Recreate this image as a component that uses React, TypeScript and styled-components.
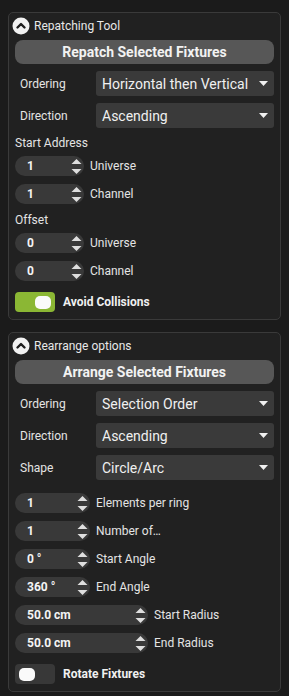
import React from 'react';
import styled, { createGlobalStyle } from 'styled-components';

const GlobalStyle = createGlobalStyle`
  html, body {
    margin: 0;
    padding: 0;
    background: #1b1b1b;
  }
  body {
    font-family: Roboto, "Liberation Sans", sans-serif;
    color: #e4e4e4;
  }
`;

const Page = styled.div`
  width: 289px;
  height: 696px;
  box-sizing: border-box;
  padding: 12px 8px 0 8px;
  display: flex;
  flex-direction: column;
  gap: 12px;
  background: #1b1b1b;
`;

const Panel = styled.section`
  display: flex;
  flex-direction: column;
  border: 1px solid #3a3a3a;
  border-radius: 5px;
  background: #212121;
  padding: 1px 0 7px;
`;

const Header = styled.div`
  height: 24px;
  display: flex;
  align-items: center;
  gap: 4px;
  padding: 0 3px;
  font-size: 12px;
  color: #e8e8e8;
`;

const Body = styled.div`
  display: flex;
  flex-direction: column;
  gap: 7px;
  padding: 0 6px;
  margin-top: 2px;
`;

const ActionButton = styled.button`
  height: 24px;
  border: none;
  border-radius: 8px;
  background: #575757;
  color: #f2f2f2;
  font-family: Roboto, "Liberation Sans", sans-serif;
  font-weight: 700;
  font-size: 14px;
  padding: 0;
`;

const FieldRow = styled.div`
  height: 25px;
  display: grid;
  grid-template-columns: 81px 1fr;
  align-items: center;
`;

const FieldLabel = styled.span`
  padding-left: 5px;
  font-size: 12px;
  color: #e4e4e4;
`;

const Select = styled.div`
  height: 25px;
  display: flex;
  align-items: center;
  justify-content: space-between;
  padding: 0 6px;
  border-radius: 3px;
  background: #3a3a3a;
  font-size: 14px;
  color: #f0f0f0;
`;

const SectionLabel = styled.div`
  height: 16px;
  line-height: 16px;
  font-size: 12px;
  margin-bottom: -2px;
  color: #e4e4e4;
`;

const SpinRow = styled.div<{ $mt?: number }>`
  height: 21px;
  display: flex;
  align-items: flex-start;
  gap: 6px;
  margin-top: ${p => p.$mt ?? 0}px;
`;

const SpinBox = styled.div<{ $w: number }>`
  width: ${p => p.$w}px;
  height: 20px;
  box-sizing: border-box;
  border-radius: 10px;
  background: #393939;
  display: flex;
  align-items: center;
  justify-content: space-between;
  padding: 0 2px 0 12px;
  font-size: 12px;
  font-weight: 700;
  color: #f4f4f4;
`;

const SpinLabel = styled.span`
  line-height: 20px;
  font-size: 12px;
  color: #e4e4e4;
`;

const ToggleRow = styled.div`
  height: 20px;
  display: flex;
  align-items: center;
  gap: 8px;
  margin-top: 3px;
  font-size: 12px;
  font-weight: 700;
  color: #f0f0f0;
`;

const Track = styled.div<{ $on: boolean }>`
  width: 40px;
  height: 20px;
  box-sizing: border-box;
  border-radius: 4px;
  background: ${p => (p.$on ? '#8bb734' : '#383838')};
  display: flex;
  align-items: center;
  justify-content: ${p => (p.$on ? 'flex-end' : 'flex-start')};
  padding: 0 4px;
`;

const Knob = styled.div`
  width: 16px;
  height: 13px;
  border-radius: 5px;
  background: #fafafa;
`;

const Collapse = () => (
  <svg width="18" height="18" viewBox="0 0 18 18">
    <circle cx="9" cy="9" r="8.5" fill="#f2f2f2" />
    <path d="M5.5 10.5 L9 7 L12.5 10.5" fill="none" stroke="#1e1e1e" strokeWidth="2.4" strokeLinecap="round" strokeLinejoin="round" />
  </svg>
);

const Caret = () => (
  <svg width="9" height="5" viewBox="0 0 9 5">
    <path d="M0 0 H9 L4.5 5 Z" fill="#f0f0f0" />
  </svg>
);

const Arrows = () => (
  <svg width="11" height="15" viewBox="0 0 11 15">
    <path d="M0.5 5 L5.5 0 L10.5 5 Z" fill="#dedede" />
    <path d="M0.5 10 L10.5 10 L5.5 15 Z" fill="#dedede" />
  </svg>
);

const Dropdown: React.FC<{ label: string; value: string }> = ({ label, value }) => (
  <FieldRow>
    <FieldLabel>{label}</FieldLabel>
    <Select>
      <span>{value}</span>
      <Caret />
    </Select>
  </FieldRow>
);

const Spin: React.FC<{ value: string; label: string; w: number; mt?: number }> = ({ value, label, w, mt }) => (
  <SpinRow $mt={mt}>
    <SpinBox $w={w}>
      <span>{value}</span>
      <Arrows />
    </SpinBox>
    <SpinLabel>{label}</SpinLabel>
  </SpinRow>
);

const Toggle: React.FC<{ on: boolean; label: string }> = ({ on, label }) => (
  <ToggleRow>
    <Track $on={on}>
      <Knob />
    </Track>
    <span>{label}</span>
  </ToggleRow>
);

export default function App() {
  return (
    <>
      <GlobalStyle />
      <Page>
        <Panel>
          <Header>
            <Collapse />
            <span>Repatching Tool</span>
          </Header>
          <Body>
            <ActionButton>Repatch Selected Fixtures</ActionButton>
            <Dropdown label="Ordering" value="Horizontal then Vertical" />
            <Dropdown label="Direction" value="Ascending" />
            <SectionLabel>Start Address</SectionLabel>
            <Spin value="1" label="Universe" w={69} />
            <Spin value="1" label="Channel" w={69} />
            <SectionLabel>Offset</SectionLabel>
            <Spin value="0" label="Universe" w={69} />
            <Spin value="0" label="Channel" w={69} />
            <Toggle on label="Avoid Collisions" />
          </Body>
        </Panel>
        <Panel>
          <Header>
            <Collapse />
            <span>Rearrange options</span>
          </Header>
          <Body>
            <ActionButton>Arrange Selected Fixtures</ActionButton>
            <Dropdown label="Ordering" value="Selection Order" />
            <Dropdown label="Direction" value="Ascending" />
            <Dropdown label="Shape" value="Circle/Arc" />
            <Spin value="1" label="Elements per ring" w={75} mt={6} />
            <Spin value="1" label="Number of…" w={75} />
            <Spin value="0 °" label="Start Angle" w={75} />
            <Spin value="360 °" label="End Angle" w={75} />
            <Spin value="50.0 cm" label="Start Radius" w={133} />
            <Spin value="50.0 cm" label="End Radius" w={133} />
            <Toggle on={false} label="Rotate Fixtures" />
          </Body>
        </Panel>
      </Page>
    </>
  );
}
